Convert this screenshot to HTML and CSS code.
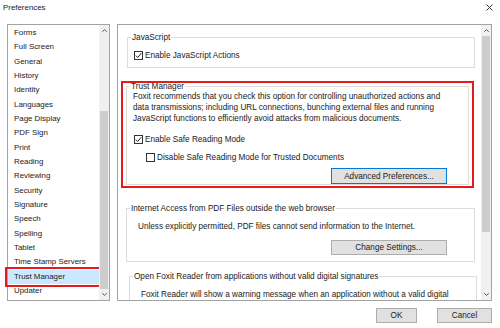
FILE: index.html
```html
<!DOCTYPE html>
<html>
<head>
<meta charset="utf-8">
<title>Preferences</title>
<link rel="stylesheet" href="styles.css">
</head>
<body>
<div class="dialog">
  <div class="titlebar">
    <span class="title">Preferences</span>
    <svg class="close" width="7" height="7" viewBox="0 0 7 7"><path d="M0.5 0.5L6.5 6.5M6.5 0.5L0.5 6.5" stroke="#333" stroke-width="1"/></svg>
  </div>
  <div class="main">
    <div class="listbox">
      <ul class="items">
        <li>Forms</li>
        <li>Full Screen</li>
        <li>General</li>
        <li>History</li>
        <li>Identity</li>
        <li>Languages</li>
        <li>Page Display</li>
        <li>PDF Sign</li>
        <li>Print</li>
        <li>Reading</li>
        <li>Reviewing</li>
        <li>Security</li>
        <li>Signature</li>
        <li>Speech</li>
        <li>Spelling</li>
        <li>Tablet</li>
        <li>Time Stamp Servers</li>
        <li class="selected">Trust Manager</li>
        <li>Updater</li>
      </ul>
      <div class="vscroll">
        <div class="arrow"><svg width="5" height="3" viewBox="0 0 5 3"><path d="M0.3 2.7L2.5 0.6L4.7 2.7" fill="none" stroke="#555" stroke-width="1"/></svg></div>
        <div class="track"><div class="thumb thumb-list"></div></div>
        <div class="arrow"><svg width="5" height="3" viewBox="0 0 5 3"><path d="M0.3 0.3L2.5 2.4L4.7 0.3" fill="none" stroke="#555" stroke-width="1"/></svg></div>
      </div>
    </div>
    <div class="panel">
      <div class="content">
        <fieldset class="group g-js">
          <legend>JavaScript</legend>
          <div class="g-body">
            <label class="check"><span class="box checked"><svg width="7" height="7" viewBox="0 0 7 7"><path d="M0.8 3.6L2.7 5.5L6.3 1.2" fill="none" stroke="#222" stroke-width="1"/></svg></span>Enable JavaScript Actions</label>
          </div>
        </fieldset>
        <div class="annot">
          <fieldset class="group g-trust">
            <legend>Trust Manager</legend>
            <div class="g-body">
              <p class="desc">Foxit recommends that you check this option for controlling unauthorized actions and data transmissions; including URL connections, bunching external files and running JavaScript functions to efficiently avoid attacks from malicious documents.</p>
              <label class="check c-safe"><span class="box checked"><svg width="7" height="7" viewBox="0 0 7 7"><path d="M0.8 3.6L2.7 5.5L6.3 1.2" fill="none" stroke="#222" stroke-width="1"/></svg></span>Enable Safe Reading Mode</label>
              <label class="check c-trusted"><span class="box"></span>Disable Safe Reading Mode for Trusted Documents</label>
              <button class="btn btn-adv">Advanced Preferences...</button>
            </div>
          </fieldset>
        </div>
        <fieldset class="group g-net">
          <legend>Internet Access from PDF Files outside the web browser</legend>
          <div class="g-body">
            <div class="line">Unless explicitly permitted, PDF files cannot send information to the Internet.</div>
            <button class="btn btn-change">Change Settings...</button>
          </div>
        </fieldset>
        <fieldset class="group g-open">
          <legend>Open Foxit Reader from applications without valid digital signatures</legend>
          <div class="g-body">
            <div class="line">Foxit Reader will show a warning message when an application without a valid digital</div>
          </div>
        </fieldset>
      </div>
      <div class="vscroll">
        <div class="arrow"><svg width="5" height="3" viewBox="0 0 5 3"><path d="M0.3 2.7L2.5 0.6L4.7 2.7" fill="none" stroke="#555" stroke-width="1"/></svg></div>
        <div class="track"><div class="thumb thumb-panel"></div></div>
        <div class="arrow"><svg width="5" height="3" viewBox="0 0 5 3"><path d="M0.3 0.3L2.5 2.4L4.7 0.3" fill="none" stroke="#555" stroke-width="1"/></svg></div>
      </div>
    </div>
  </div>
  <div class="footer">
    <button class="btn btn-ok">OK</button>
    <button class="btn btn-cancel">Cancel</button>
  </div>
</div>
</body>
</html>
```
FILE: styles.css
```css
* { box-sizing: border-box; }
html, body { margin: 0; padding: 0; }
body {
  width: 500px;
  height: 328px;
  overflow: hidden;
  background: #fff;
  font-family: "Liberation Sans", Arial, sans-serif;
  font-size: 7.9px;
  line-height: 9px;
  color: #1a1a1a;
}
.dialog { display: flex; flex-direction: column; height: 328px; }
.titlebar {
  height: 24px;
  display: flex;
  justify-content: space-between;
  align-items: flex-start;
  padding: 3px 7px 0 3px;
}
.close { margin-top: 1px; }

.main { display: flex; gap: 7px; padding-left: 7px; height: 277px; }

.listbox {
  width: 103px;
  border: 1px solid #a3a3a3;
  display: flex;
}
.items { flex: 1; list-style: none; margin: 0; padding: 1px 0 0 0; }
.items li {
  height: 14.33px;
  line-height: 14.33px;
  padding-left: 6px;
  white-space: nowrap;
}
.items li.selected {
  background: #cce8ff;
  outline: 2px solid #e41b1b;
  outline-offset: 1px;
}

.vscroll {
  width: 10px;
  background: #f0f0f0;
  display: flex;
  flex-direction: column;
}
.arrow { height: 11px; display: flex; align-items: center; justify-content: center; }
.track { flex: 1; display: flex; flex-direction: column; }
.thumb { background: #cdcdcd; margin: 0 1px; }
.thumb-list { margin-top: 75px; flex: 1; }
.thumb-panel { height: 196px; }

.panel {
  width: 375px;
  border: 1px solid #a3a3a3;
  display: flex;
}
.content {
  flex: 1;
  overflow: hidden;
  display: flex;
  flex-direction: column;
  font-size: 8.2px;
}

.group {
  border: 1px solid #dcdcdc;
  margin: 0;
  padding: 0;
  min-width: 0;
}
.group legend {
  padding: 0 1px;
  margin-left: 3px;
  line-height: 9px;
  white-space: nowrap;
}
.g-body { display: flex; flex-direction: column; }

.check { display: flex; align-items: center; height: 10px; white-space: nowrap; }
.box {
  width: 9px;
  height: 9px;
  border: 1px solid #333;
  background: #fff;
  margin-right: 2px;
  display: flex;
  align-items: center;
  justify-content: center;
  flex: none;
}

.g-js { margin: 8px 6px 0 9px; }
.g-js .g-body { padding: 8px 6px 7px 6px; }

.annot {
  margin: 13px 7px 0 3px;
  border: 2px solid #e41b1b;
  padding: 0 3px 1px 3px;
}
.g-trust { margin-top: -1px; }
.g-trust .g-body { padding: 0 6px 0 6px; }
.desc { margin: 0; line-height: 11px; max-width: 316px; }
.c-safe { margin-top: 10px; margin-left: 1px; }
.c-trusted { margin-top: 8px; margin-left: 13px; }

.btn {
  font-family: inherit;
  font-size: 8.2px;
  color: #1a1a1a;
  background: #e1e1e1;
  border: 1px solid #adadad;
  padding: 0;
  height: 15px;
  line-height: 13px;
  text-align: center;
}
.btn-adv {
  align-self: flex-end;
  width: 116px;
  height: 16px;
  margin-top: 6px;
  margin-right: 15px;
  border-color: #0078d7;
}

.g-net { margin: 16px 6px 0 8px; }
.g-net .g-body { padding: 9px 6px 6px 11px; }
.line { height: 10px; line-height: 10px; white-space: nowrap; }
.btn-change {
  align-self: flex-end;
  width: 116px;
  margin-top: 8px;
  margin-right: 21px;
}

.g-open { margin: 10px 4px 0 11px; flex: none; }
.g-open .g-body { padding: 9px 6px 6px 11px; }

.footer {
  display: flex;
  justify-content: flex-end;
  gap: 20px;
  padding: 7px 8px 0 0;
}
.btn-ok { width: 41px; }
.btn-cancel { width: 55px; }
```
